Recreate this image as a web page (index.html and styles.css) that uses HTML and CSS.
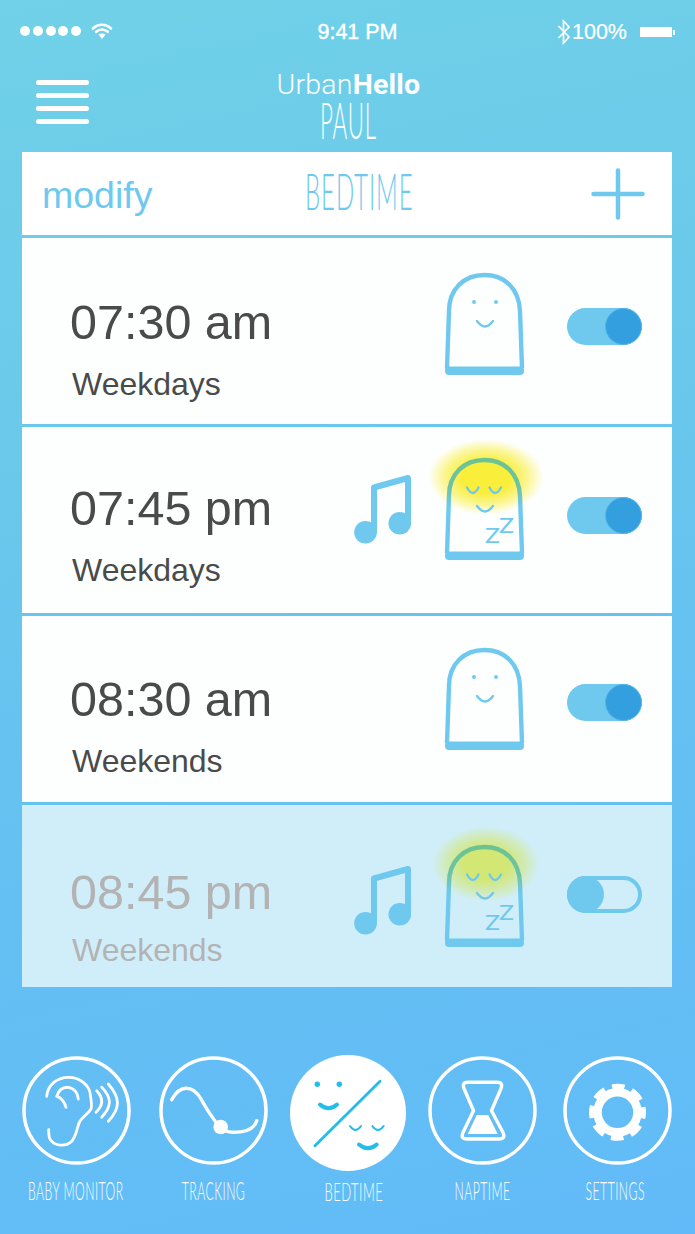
FILE: index.html
```html
<!DOCTYPE html>
<html lang="en">
<head>
<meta charset="utf-8">
<title>UrbanHello Paul - Bedtime</title>
<link rel="stylesheet" href="styles.css">
</head>
<body>
<svg class="defs" width="0" height="0" aria-hidden="true">
  <defs>
    <radialGradient id="glow">
      <stop offset="0" stop-color="#f9ee3a"/>
      <stop offset=".42" stop-color="#f9ee3a"/>
      <stop offset=".72" stop-color="#f9ee3a" stop-opacity=".55"/>
      <stop offset="1" stop-color="#f9ee3a" stop-opacity="0"/>
    </radialGradient>
    <radialGradient id="glow-dim">
      <stop offset="0" stop-color="#d2e774"/>
      <stop offset=".4" stop-color="#d2e774"/>
      <stop offset=".7" stop-color="#d2e774" stop-opacity=".55"/>
      <stop offset="1" stop-color="#d2e774" stop-opacity="0"/>
    </radialGradient>
    <linearGradient id="shell" x1="0" y1="0" x2="0" y2="1">
      <stop offset="0" stop-color="#6cc391"/>
      <stop offset=".3" stop-color="#6cc3a8"/>
      <stop offset=".5" stop-color="#6fc9ee"/>
    </linearGradient>
    <symbol id="note" viewBox="0 0 57 70">
      <path d="M20 58V13.500L54 4V49" fill="none" stroke="#6fc9ee" stroke-width="6" stroke-linejoin="round" stroke-linecap="round"/>
      <circle cx="11.500" cy="58.300" r="11.300" fill="#6fc9ee"/>
      <circle cx="45.800" cy="49.300" r="11.300" fill="#6fc9ee"/>
    </symbol>
  </defs>
</svg>

<div class="screen">
  <header class="status">
    <div class="status-left">
      <span class="dots"><i></i><i></i><i></i><i></i><i></i></span>
      <svg class="wifi" width="22" height="19" viewBox="0 0 22 19">
        <path d="M2 7.500C7 2.500 15 2.500 20 7.500M5.200 10.800C8.500 7.800 13.500 7.800 16.800 10.800" fill="none" stroke="#fff" stroke-width="2.600" stroke-linecap="round"/>
        <path d="M7.500 13.500C9.500 12 12.500 12 14.500 13.500L11 18Z" fill="#fff"/>
      </svg>
    </div>
    <div class="status-time">9:41 PM</div>
    <div class="status-right">
      <svg class="bt" width="14" height="26" viewBox="0 0 14 26">
        <path d="M1.500 7L12 18L6.500 24V2L12 8L1.500 19" fill="none" stroke="#fff" stroke-width="1.700"/>
      </svg>
      <span class="pct">100%</span>
      <span class="battery"></span>
      <span class="battery-tip"></span>
    </div>
  </header>

  <div class="appbar">
    <button class="burger" aria-label="Menu"><i></i><i></i><i></i><i></i></button>
    <div class="brand">
      <div class="brand-name">Urban<b>Hello</b></div>
      <div class="hand brand-paul">PAUL</div>
    </div>
  </div>

  <main class="panel">
    <div class="panel-head">
      <span class="modify">modify</span>
      <span class="hand panel-title">BEDTIME</span>
      <svg class="plus" width="54" height="52" viewBox="0 0 54 52">
        <path d="M27 2.500V49.500M2.500 26H51.500" stroke="#6fc9ee" stroke-width="4.500" stroke-linecap="round"/>
      </svg>
    </div>

    <section class="row r1">
      <div class="times"><div class="time">07:30 am</div><div class="days">Weekdays</div></div>
      <span></span>
      <svg class="device" width="81" height="103" viewBox="0 0 81 103">
        <path d="M3 95L5 38C5 16 20 2 40.500 2C61 2 75 16 76 38L78 95" fill="none" stroke="#6fc9ee" stroke-width="4.400"/>
        <path d="M1 97Q1 93.500 4 93.500H77Q80 93.500 80 97V98Q80 102 76 102H5Q1 102 1 98Z" fill="#6fc9ee"/>
        <circle cx="30" cy="29" r="2" fill="#6fc9ee"/><circle cx="52" cy="29" r="2" fill="#6fc9ee"/>
        <path d="M33 48Q41 59 49 48" fill="none" stroke="#6fc9ee" stroke-width="2.300" stroke-linecap="round"/>
      </svg>
      <div class="toggle on"><i></i></div>
    </section>

    <section class="row r2">
      <div class="times"><div class="time">07:45 pm</div><div class="days">Weekdays</div></div>
      <svg class="note" width="57" height="70"><use href="#note"/></svg>
      <svg class="device" width="81" height="103" viewBox="0 0 81 103">
        <ellipse cx="42" cy="19" rx="58" ry="38" fill="url(#glow)"/>
        <path d="M3 95L5 38C5 16 20 2 40.500 2C61 2 75 16 76 38L78 95" fill="none" stroke="url(#shell)" stroke-width="4.400"/>
        <path d="M1 97Q1 93.500 4 93.500H77Q80 93.500 80 97V98Q80 102 76 102H5Q1 102 1 98Z" fill="#6fc9ee"/>
        <path d="M23 29.500Q29 40.500 34.500 29.500M45.500 29.500Q51 40.500 57 29.500M33 48Q41 59 49 48" fill="none" stroke="#6fc9ee" stroke-width="2.300" stroke-linecap="round"/>
        <text x="41" y="85" class="zz" textLength="15" lengthAdjust="spacingAndGlyphs">Z</text><text x="55" y="75" class="zz" textLength="15" lengthAdjust="spacingAndGlyphs">Z</text>
      </svg>
      <div class="toggle on"><i></i></div>
    </section>

    <section class="row r3">
      <div class="times"><div class="time">08:30 am</div><div class="days">Weekends</div></div>
      <span></span>
      <svg class="device" width="81" height="103" viewBox="0 0 81 103">
        <path d="M3 95L5 38C5 16 20 2 40.500 2C61 2 75 16 76 38L78 95" fill="none" stroke="#6fc9ee" stroke-width="4.400"/>
        <path d="M1 97Q1 93.500 4 93.500H77Q80 93.500 80 97V98Q80 102 76 102H5Q1 102 1 98Z" fill="#6fc9ee"/>
        <circle cx="30" cy="29" r="2" fill="#6fc9ee"/><circle cx="52" cy="29" r="2" fill="#6fc9ee"/>
        <path d="M33 48Q41 59 49 48" fill="none" stroke="#6fc9ee" stroke-width="2.300" stroke-linecap="round"/>
      </svg>
      <div class="toggle on"><i></i></div>
    </section>

    <section class="row r4 disabled">
      <div class="times"><div class="time">08:45 pm</div><div class="days">Weekends</div></div>
      <svg class="note" width="57" height="70"><use href="#note"/></svg>
      <svg class="device" width="81" height="103" viewBox="0 0 81 103">
        <ellipse cx="42" cy="19" rx="54" ry="38" fill="url(#glow-dim)"/>
        <path d="M3 95L5 38C5 16 20 2 40.500 2C61 2 75 16 76 38L78 95" fill="none" stroke="url(#shell)" stroke-width="4.400"/>
        <path d="M1 97Q1 93.500 4 93.500H77Q80 93.500 80 97V98Q80 102 76 102H5Q1 102 1 98Z" fill="#6fc9ee"/>
        <path d="M23 29.500Q29 40.500 34.500 29.500M45.500 29.500Q51 40.500 57 29.500M33 48Q41 59 49 48" fill="none" stroke="#6fc9ee" stroke-width="2.300" stroke-linecap="round"/>
        <text x="41" y="85" class="zz" textLength="15" lengthAdjust="spacingAndGlyphs">Z</text><text x="55" y="75" class="zz" textLength="15" lengthAdjust="spacingAndGlyphs">Z</text>
      </svg>
      <div class="toggle off"><i></i></div>
    </section>
  </main>

  <nav class="tabs">
    <div class="tab t1">
      <svg class="tab-icon" width="109" height="109" viewBox="0 0 109 109">
        <circle cx="54.500" cy="54.500" r="52.500" fill="none" stroke="#fff" stroke-width="3.500"/>
        <g fill="none" stroke="#fff" stroke-width="2.800" stroke-linecap="round">
          <path d="M24.700 40.300C26 28 36 21.300 46.300 21.300C59 21.300 68 30 68.500 40C69.500 46 70 50 69 53C66 58 60 61 57.500 66C54.500 72 55 80 49 86C43 91 33 90 28.500 84C26.500 81 26.700 77 26.700 73.700"/>
          <path d="M34.700 40.300C37 33 42 31 46.300 31.300C52 32 56 37 56.300 43M34.700 40.300C39 41.500 42.500 46 44 51.300"/>
          <path d="M74.700 34.700C81.500 42 81.500 49 74 56.300M79.700 31.300C90 42 90 50 79.700 61.300M86.300 28C98.500 42 98.500 52 86.300 65.300"/>
        </g>
      </svg>
      <span class="hand tab-label">BABY MONITOR</span>
    </div>
    <div class="tab t2">
      <svg class="tab-icon" width="109" height="109" viewBox="0 0 109 109">
        <circle cx="54.500" cy="54.500" r="52.500" fill="none" stroke="#fff" stroke-width="3.500"/>
        <path d="M12.700 43.700C17 36 21 32.300 27 32.300C34 32.300 38 36 42 43C47 52 54 63 61 71.300C66 76 70 76.300 74 76.300C84 76.300 95 74 97.700 64.700" fill="none" stroke="#fff" stroke-width="3.400" stroke-linecap="round"/>
        <circle cx="61.700" cy="71" r="7.300" fill="#fff"/>
      </svg>
      <span class="hand tab-label">TRACKING</span>
    </div>
    <div class="tab t3">
      <svg class="tab-icon active" width="116" height="116" viewBox="0 0 116 116">
        <circle cx="58" cy="58" r="58" fill="#fff"/>
        <circle cx="27.300" cy="29.300" r="2.700" fill="#22bdea"/><circle cx="49.300" cy="29.300" r="2.700" fill="#22bdea"/>
        <g fill="none" stroke="#22bdea" stroke-linecap="round">
          <path d="M30 49.500Q38.500 57 47 49.500M69 89.500Q78 97 86.700 89.500" stroke-width="4"/>
          <path d="M25 90.700L90 26.300" stroke-width="2.800"/>
          <path d="M60 71Q65.500 79 71 71M82.300 71Q88 79 93.700 71" stroke-width="2"/>
        </g>
      </svg>
      <span class="hand tab-label">BEDTIME</span>
    </div>
    <div class="tab t4">
      <svg class="tab-icon" width="109" height="109" viewBox="0 0 109 109">
        <circle cx="54.500" cy="54.500" r="52.500" fill="none" stroke="#fff" stroke-width="3.500"/>
        <path d="M40 26.300H69Q75.500 26.300 73 32.500L63.500 54.700L75 76.500Q78 83 71 83H39Q32 83 35 76.500L45.500 54.700L36 32.500Q33.500 26.300 40 26.300Z" fill="none" stroke="#fff" stroke-width="3.400" stroke-linejoin="round"/>
        <path d="M48.700 59H60.300L69.700 78H39.700Z" fill="#fff"/>
      </svg>
      <span class="hand tab-label">NAPTIME</span>
    </div>
    <div class="tab t5">
      <svg class="tab-icon" width="109" height="109" viewBox="0 0 109 109">
        <circle cx="54.500" cy="54.500" r="52.500" fill="none" stroke="#fff" stroke-width="3.500"/>
        <circle cx="54.500" cy="56.300" r="20" fill="none" stroke="#fff" stroke-width="8.500"/>
        <circle cx="54.500" cy="56.300" r="25.500" fill="none" stroke="#fff" stroke-width="6" stroke-dasharray="12.500 7.530" stroke-dashoffset="6.250"/>
      </svg>
      <span class="hand tab-label">SETTINGS</span>
    </div>
  </nav>
</div>
</body>
</html>
```

FILE: styles.css
```css
* { box-sizing: border-box; }
html, body { margin: 0; padding: 0; }
body {
  width: 695px;
  height: 1234px;
  overflow: hidden;
  font-family: "Liberation Sans", Arial, sans-serif;
  color: #fff;
}
.defs { display: block; height: 0; }
.screen {
  height: 1234px;
  background: linear-gradient(168deg, #70d1e8 0%, #6ccbea 25%, #64c0f2 65%, #62bbf8 100%);
  display: flex;
  flex-direction: column;
}

/* status bar */
.status {
  height: 62px;
  padding: 20px 20px 0;
  display: grid;
  grid-template-columns: 1fr auto 1fr;
  align-items: start;
}
.status-left { display: flex; align-items: center; height: 21px; gap: 10px; }
.dots { display: flex; gap: 2.800px; }
.dots i { width: 10px; height: 10px; border-radius: 50%; background: #fff; }
.status-time { font-size: 21.500px; line-height: 24px; transform: translateX(10px); -webkit-text-stroke: .4px #fff; }
.status-right { display: flex; justify-content: flex-end; align-items: center; height: 24px; }
.bt { margin-right: 1px; }
.pct { font-size: 21.500px; line-height: 24px; margin-right: 13px; -webkit-text-stroke: .2px #fff; }
.battery { width: 32px; height: 10px; background: #fff; }
.battery-tip { width: 2px; height: 5px; margin-left: 1px; background: #fff; }

/* app bar */
.appbar { height: 90px; position: relative; padding: 18px 0 0 36px; }
.burger {
  display: flex;
  flex-direction: column;
  gap: 8px;
  width: 53px;
  padding: 0;
  border: 0;
  background: none;
}
.burger i { display: block; width: 53px; height: 5px; border-radius: 3px; background: #fff; }
.brand {
  position: absolute;
  left: 0;
  top: 10px;
  width: 697px;
  display: flex;
  flex-direction: column;
  align-items: center;
}
.brand-name { font-family: Roboto, "Liberation Sans", sans-serif; font-size: 28.500px; font-weight: 300; line-height: 26px; letter-spacing: .2px; }
.brand-name b { font-weight: 700; }

/* hand-lettered captions: a tall, light face squeezed horizontally */
.hand {
  display: inline-block;
  font-family: Lato, "Liberation Sans", sans-serif;
  font-weight: 300;
  white-space: nowrap;
}
.brand-paul { font-size: 52px; line-height: 38px; height: 38px; margin-top: 2px; letter-spacing: 2px; transform: scaleX(.43); }

/* panel */
.panel {
  margin: 0 23px 0 22px;
  display: flex;
  flex-direction: column;
  gap: 3px;
}
.panel-head {
  height: 83px;
  background: #fff;
  display: grid;
  grid-template-columns: 220px 1fr 80px;
  align-items: center;
  padding-left: 20px;
}
.modify { font-size: 37.500px; line-height: 44px; color: #6fc9ee; margin-top: 3px; }
.panel-title { font-size: 51px; line-height: 40px; letter-spacing: 2px; color: #6fc9ee; justify-self: start; margin: -5px 0 0 43px; transform-origin: left center; transform: scaleX(.47); }
.plus { margin-left: -1px; }

.row {
  height: 186px;
  background: #fdffff;
  display: grid;
  grid-template-columns: 284px 90px 81px 75px;
  align-items: start;
  padding-left: 48px;
}
.times { display: flex; flex-direction: column; }
.time { font-size: 48.500px; line-height: 56px; color: #4a4a4a; }
.days { font-size: 32px; line-height: 38px; color: #4a4a4a; margin: 15px 0 0 2px; }
.device { overflow: visible; }
.toggle {
  width: 75px;
  height: 37px;
  margin-left: 42px;
  border-radius: 19px;
  display: flex;
}
.toggle i { width: 37px; height: 37px; border-radius: 50%; }
.toggle.on { background: #6fc9ee; justify-content: flex-end; }
.toggle.on i { background: #339fdf; border: 1px solid #54b5e8; }
.toggle.off { border: 4px solid #6fc9ee; background: transparent; }
.toggle.off i { width: 37px; height: 37px; margin: -4px; background: #6fc9ee; }
.zz { font-family: Lato, "Liberation Sans", sans-serif; font-weight: 400; font-size: 21px; fill: #6fc9ee; }

.r1 .times { margin-top: 56px; }
.r1 .device { margin-top: 35px; }
.r1 .toggle { margin-top: 70px; }
.r2 .times { margin-top: 53px; }
.r2 .note { margin-top: 47px; }
.r2 .device { margin-top: 31px; }
.r2 .toggle { margin-top: 70px; }
.r3 .times { margin-top: 55px; }
.r3 .device { margin-top: 32px; }
.r3 .toggle { margin-top: 68px; }
.r4 { height: 182px; background: #d0eefa; }
.r4 .times { margin-top: 59px; }
.r4 .time, .r4 .days { color: #b3b3b3; }
.r4 .days { margin-top: 11px; }
.r4 .note { margin-top: 60px; }
.r4 .device { margin-top: 40px; }
.r4 .toggle { margin-top: 71px; }

/* bottom tabs */
.tabs {
  display: flex;
  align-items: flex-start;
  padding: 69px 0 0 22px;
}
.tab { display: flex; flex-direction: column; align-items: center; width: 109px; }
.t1 { margin-right: 28px; }
.t2 { margin-right: 22px; }
.t3 { width: 116px; margin-right: 22px; margin-top: -1px; }
.t4 { margin-right: 26px; }
.tab-icon { display: block; flex: none; }
.tab-label { font-size: 26px; line-height: 20px; margin-top: 15px; transform: scaleX(.47); letter-spacing: 1px; }
.t1 .tab-label { margin-right: 2px; }
.t3 .tab-label { margin: 10px 0 0 11px; transform: scaleX(.5); }
.t5 .tab-label { margin-right: 4px; }
```
